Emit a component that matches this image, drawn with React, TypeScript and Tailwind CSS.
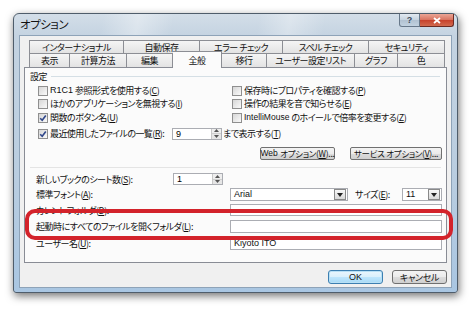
import React from "react";

const JP = "font-['Noto_Sans_CJK_JP','Noto_Sans',sans-serif] [font-feature-settings:'palt']";

function U({ c }: { c: string }) {
  return <span className="underline underline-offset-1">{c}</span>;
}

function Cb({ checked }: { checked?: boolean }) {
  return (
    <span className="relative flex h-[10px] w-[10px] shrink-0 items-center justify-center border border-[#8f8f8f] bg-[linear-gradient(135deg,#d6d6d6,#fafafa)]">
      {checked && (
        <svg width="8" height="8" viewBox="0 0 8 8" className="absolute">
          <path d="M1.2 4.2 L3.2 6.2 L6.8 1.4" fill="none" stroke="#30478a" strokeWidth="1.6" />
        </svg>
      )}
    </span>
  );
}

function Spin({ value }: { value: string }) {
  return (
    <div className="flex h-[12px] w-[50px] shrink-0 border border-[#abadb3] bg-white">
      <span className="flex-1 pl-[3px] text-[9px] leading-[10px] tracking-normal font-['Liberation_Sans',sans-serif] text-black">{value}</span>
      <div className="flex w-[10px] flex-col border-l border-[#c8c8c8]">
        <div className="flex flex-1 items-center justify-center bg-[#eeeeee] border-b border-[#cfcfcf]">
          <svg width="5" height="3" viewBox="0 0 5 3"><path d="M0 3 L2.5 0 L5 3Z" fill="#555" /></svg>
        </div>
        <div className="flex flex-1 items-center justify-center bg-[#e6e6e6]">
          <svg width="5" height="3" viewBox="0 0 5 3"><path d="M0 0 L2.5 3 L5 0Z" fill="#555" /></svg>
        </div>
      </div>
    </div>
  );
}

function DropBtn() {
  return (
    <div className="mr-[1px] flex h-[11px] w-[12px] items-center justify-center border border-[#8a8a8a] bg-[linear-gradient(#f7f7f7,#d9d9d9)]">
      <svg width="6" height="4" viewBox="0 0 6 4"><path d="M0 0 L3 4 L6 0Z" fill="#222" /></svg>
    </div>
  );
}

function Btn({ children, w }: { children: React.ReactNode; w: string }) {
  return (
    <div className={"flex h-[13px] items-center justify-center whitespace-nowrap rounded-[2px] border border-[#707070] bg-[linear-gradient(#f3f3f3_0%,#ebebeb_50%,#dcdcdc_51%,#cfcfcf_100%)] text-[8.5px] leading-none tracking-[-0.3px] text-[#111] " + w}>
      {children}
    </div>
  );
}

const row1 = [
  { t: "インターナショナル", w: "w-[95px]" },
  { t: "自動保存", w: "w-[76px]" },
  { t: "エラー チェック", w: "w-[83px]" },
  { t: "スペル チェック", w: "w-[86px]" },
  { t: "セキュリティ", w: "w-[76px]" },
];
const row2 = [
  { t: "表示", w: "w-[41px]" },
  { t: "計算方法", w: "w-[57px]" },
  { t: "編集", w: "w-[46px]" },
  { t: "全般", w: "w-[49px]", sel: true },
  { t: "移行", w: "w-[45px]" },
  { t: "ユーザー設定リスト", w: "w-[88px]" },
  { t: "グラフ", w: "w-[43px]" },
  { t: "色", w: "w-[47px]" },
];

const LAT = "font-['Liberation_Sans','Noto_Sans_CJK_JP',sans-serif] tracking-normal";

export default function App() {
  return (
    <div className={"relative h-[311px] w-[474px] overflow-hidden bg-white " + JP}>
      <div className="ml-[13px] mt-[13px] flex h-[280px] w-[445px] flex-col rounded-t-[6px] rounded-b-[3px] border border-[#4f5d6b] bg-[linear-gradient(180deg,#d3dee8_0%,#c4d3e1_8%,#b9cde0_60%,#a9c6e2_100%)] shadow-[1px_3px_8px_rgba(0,0,0,0.55)]">
        {/* title bar */}
        <div className="relative flex h-[21px] shrink-0 items-start bg-[linear-gradient(100deg,rgba(255,255,255,0)_20%,rgba(255,255,255,0.35)_28%,rgba(255,255,255,0)_36%,rgba(255,255,255,0)_55%,rgba(255,255,255,0.3)_62%,rgba(255,255,255,0)_70%)]">
          <span className="pl-[6px] pt-[4px] text-[11.5px] leading-[13px] tracking-[-0.5px] text-[#111]">オプション</span>
          <div className="ml-auto mr-[3px] flex">
            <div className="flex h-[13px] w-[21px] items-center justify-center rounded-bl-[3px] border border-t-0 border-[#67788a] bg-[linear-gradient(#e2e9f0,#c5d2de_50%,#b1c1d1_51%,#c2d2e0)]">
              <span className="text-[9px] font-bold leading-none text-[#3d4b5a] font-['Liberation_Sans',sans-serif]">?</span>
            </div>
            <div className="flex h-[13px] w-[34px] items-center justify-center rounded-br-[3px] border border-l-0 border-t-0 border-[#6b2a22] bg-[linear-gradient(#eaa595,#d8725e_50%,#c7412b_51%,#d26a4e)]">
              <svg width="8" height="7" viewBox="0 0 8 7"><path d="M1 1 L7 6 M7 1 L1 6" stroke="#fff" strokeWidth="1.8" /></svg>
            </div>
          </div>
        </div>
        {/* client */}
        <div className="mx-[5px] mb-[4px] flex flex-1 flex-col border border-[#8ea3b8] bg-[#f0f0f0] pt-[4px] text-[#111]">
          {/* tabs */}
          <div className="ml-[9px] flex w-[416px] flex-col text-[9px] leading-none tracking-[-0.5px]">
            <div className="flex h-[13px]">
              {row1.map((t, i) => (
                <div key={i} className={"flex items-center justify-center border-t border-r border-[#8c8e94] bg-[linear-gradient(#f5f5f5,#e3e3e3)] " + (i === 0 ? "border-l " : "") + t.w}>
                  {t.t}
                </div>
              ))}
            </div>
            <div className="relative z-10 -mb-px flex h-[15px]">
              {row2.map((t, i) =>
                t.sel ? (
                  <div key={i} className={"-mt-[2px] flex h-[17px] items-center justify-center border-t border-r border-[#8c8e94] bg-[#fbfbfb] " + t.w}>
                    {t.t}
                  </div>
                ) : (
                  <div key={i} className={"flex h-[14px] items-center justify-center border-t border-r border-[#8c8e94] bg-[linear-gradient(#f5f5f5,#e3e3e3)] " + (i === 0 ? "border-l " : "") + t.w}>
                    {t.t}
                  </div>
                )
              )}
            </div>
          </div>
          {/* panel */}
          <div className="relative ml-[4px] flex h-[196px] w-[423px] flex-col border border-[#898c95] bg-[#fbfbfb] pt-[3px] text-[9px] leading-none tracking-[-0.5px]">
            <div className="flex h-[11px] items-center pl-[5px]">
              <span>設定</span>
              <div className="ml-[4px] mr-[6px] h-px flex-1 bg-[#d5dfe5]" />
            </div>
            <div className="mt-[2px] flex h-[13px] items-center">
              <div className="ml-[13px] flex w-[194px] items-center gap-[2px]"><Cb /><span className={LAT}>R1C1</span><span>参照形式を使用する(<U c="C" />)</span></div>
              <div className="flex items-center gap-[2px]"><Cb /><span>保存時にプロパティを確認する(<U c="P" />)</span></div>
            </div>
            <div className="flex h-[13px] items-center">
              <div className="ml-[13px] flex w-[194px] items-center gap-[2px]"><Cb /><span>ほかのアプリケーションを無視する(<U c="I" />)</span></div>
              <div className="flex items-center gap-[2px]"><Cb /><span>操作の結果を音で知らせる(<U c="E" />)</span></div>
            </div>
            <div className="flex h-[15px] items-center">
              <div className="ml-[13px] flex w-[194px] items-center gap-[2px]"><Cb checked /><span>関数のボタン名(<U c="U" />)</span></div>
              <div className="flex items-center gap-[2px]"><Cb /><span className={LAT + " text-[8.5px]"}>IntelliMouse</span><span>のホイールで倍率を変更する(<U c="Z" />)</span></div>
            </div>
            <div className="flex h-[17px] items-center">
              <div className="ml-[13px] flex items-center gap-[2px]"><Cb checked /><span className="w-[122px] whitespace-nowrap tracking-[-0.6px]">最近使用したファイルの一覧(<U c="R" />):</span></div>
              <Spin value="9" />
              <span className="ml-[1px]">まで表示する(<U c="T" />)</span>
            </div>
            <div className="mt-[5px] flex justify-end gap-[15px] pr-[4px]">
              <Btn w="w-[75px]"><span className={LAT}>Web&nbsp;</span>オプション(<U c="W" />)...</Btn>
              <Btn w="w-[92px]">サービス オプション(<U c="V" />)...</Btn>
            </div>
            <div className="mx-[5px] mt-[7px] h-px bg-[#e4e4e4]" />
            <div className="mt-[5px] flex h-[12px] items-center pl-[11px]">
              <span className="w-[137px]">新しいブックのシート数(<U c="S" />):</span>
              <Spin value="1" />
            </div>
            <div className="mt-[3px] flex h-[13px] items-center pl-[11px]">
              <span className="w-[194px]">標準フォント(<U c="A" />):</span>
              <div className="flex h-[13px] w-[118px] items-center border border-[#abadb3] bg-white">
                <span className="flex-1 pl-[3px] text-[9px] tracking-normal font-['Liberation_Sans',sans-serif]">Arial</span>
                <DropBtn />
              </div>
              <span className="ml-[7px] w-[47px] whitespace-nowrap">サイズ(<U c="E" />):</span>
              <div className="flex h-[13px] w-[40px] items-center border border-[#abadb3] bg-white">
                <span className="flex-1 pl-[3px] text-[9px] tracking-normal font-['Liberation_Sans',sans-serif]">11</span>
                <DropBtn />
              </div>
            </div>
            <div className="mt-[3px] flex h-[12px] items-center pl-[11px]">
              <span className="w-[194px]">カレント フォルダ(<U c="D" />):</span>
              <div className="h-[12px] w-[212px] border border-[#abadb3] bg-white" />
            </div>
            <div className="mt-[4px] flex h-[13px] items-center pl-[11px]">
              <span className="w-[194px] whitespace-nowrap">起動時にすべてのファイルを開くフォルダ(<U c="L" />):</span>
              <div className="h-[13px] w-[212px] border border-[#abadb3] bg-white" />
            </div>
            <div className="mt-[4px] flex h-[13px] items-center pl-[11px]">
              <span className="w-[194px]">ユーザー名(<U c="U" />):</span>
              <div className="flex h-[13px] w-[212px] items-center border border-[#abadb3] bg-white pl-[3px] text-[9px] tracking-normal font-['Liberation_Sans',sans-serif]">Kiyoto ITO</div>
            </div>
            {/* red highlight */}
            <div className="absolute left-[0px] top-[141px] h-[31px] w-[428px] rounded-[10px] border-[4px] border-[#d3232b]" />
          </div>
          {/* bottom buttons */}
          <div className="mt-[7px] flex justify-end gap-[9px] pr-[4px]">
            <div className="flex h-[14px] w-[55px] items-center justify-center rounded-[3px] border border-[#3c7fb1] bg-[linear-gradient(#eaf6fd,#d9f0fc_50%,#bee6fd_51%,#a7d9f5)] text-[9px] leading-none font-['Liberation_Sans',sans-serif] shadow-[inset_0_0_0_1px_#b8e0f5]">OK</div>
            <div className="flex h-[14px] w-[55px] items-center justify-center rounded-[3px] border border-[#707070] bg-[linear-gradient(#f3f3f3,#ebebeb_50%,#dddddd_51%,#cfcfcf)] text-[9px] leading-none tracking-[-0.3px]">キャンセル</div>
          </div>
        </div>
      </div>
    </div>
  );
}
